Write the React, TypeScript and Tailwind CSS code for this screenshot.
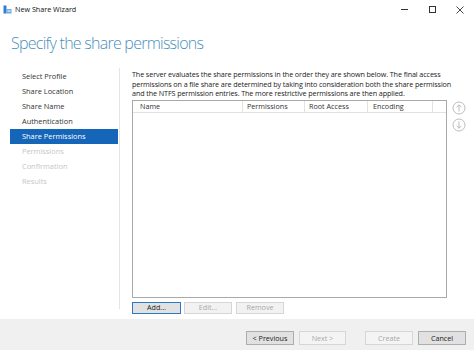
import React from "react";

const navItems: { label: string; state: "normal" | "active" | "disabled" }[] = [
  { label: "Select Profile", state: "normal" },
  { label: "Share Location", state: "normal" },
  { label: "Share Name", state: "normal" },
  { label: "Authentication", state: "normal" },
  { label: "Share Permissions", state: "active" },
  { label: "Permissions", state: "disabled" },
  { label: "Confirmation", state: "disabled" },
  { label: "Results", state: "disabled" },
];

function WizardIcon() {
  return (
    <svg width="9" height="9" viewBox="0 0 9 9">
      <rect x="0.5" y="0.5" width="3" height="8" fill="#2f7fd0" />
      <rect x="3.5" y="4" width="5" height="4.5" fill="#6aa9e4" />
      <rect x="4.5" y="5.5" width="3" height="1" fill="#ffffff" />
    </svg>
  );
}

function ArrowCircle({ dir }: { dir: "up" | "down" }) {
  return (
    <svg width="14" height="14" viewBox="0 0 14 14">
      <circle cx="7" cy="7" r="6" fill="none" stroke="#b5b5b5" strokeWidth="0.9" />
      {dir === "up" ? (
        <path d="M7 10.5V3.8M4.6 6.2L7 3.8l2.4 2.4" fill="none" stroke="#b5b5b5" strokeWidth="0.9" />
      ) : (
        <path d="M7 3.5v6.7M4.6 7.8L7 10.2l2.4-2.4" fill="none" stroke="#b5b5b5" strokeWidth="0.9" />
      )}
    </svg>
  );
}

export default function App() {
  return (
    <div className="w-[474px] h-[350px] bg-white flex flex-col overflow-hidden font-['Open_Sans','Noto_Sans',sans-serif] text-[#222]">
      {/* Title bar */}
      <div className="h-[19px] flex items-center pl-[3px] shrink-0">
        <WizardIcon />
        <span className="ml-[3px] text-[7.2px] leading-none text-[#111]">New Share Wizard</span>
        <div className="ml-auto flex items-center h-full">
          <div className="w-[28px] flex justify-center items-center">
            <div className="w-[7px] h-px bg-[#333]" />
          </div>
          <div className="w-[28px] flex justify-center items-center">
            <div className="w-[7px] h-[7px] border border-[#333]" />
          </div>
          <div className="w-[28px] flex justify-center items-center text-[#333]">
            <svg width="8" height="8" viewBox="0 0 8 8">
              <path d="M0.5 0.5l7 7M7.5 0.5l-7 7" stroke="#333" strokeWidth="0.9" />
            </svg>
          </div>
        </div>
      </div>

      {/* Header */}
      <div className="h-[45px] shrink-0 pl-[11px] pt-[14px]">
        <div className="text-[16px] leading-[20px] font-light text-[#4a8fba] tracking-[-0.75px]">
          Specify the share permissions
        </div>
      </div>

      {/* Main */}
      <div className="flex-1 flex min-h-0">
        {/* Nav */}
        <div className="w-[120px] shrink-0 pt-[4px] flex">
          <div className="w-[119px] pt-[1px]">
            {navItems.map((item) => (
              <div
                key={item.label}
                className={
                  item.state === "active"
                    ? "ml-[10px] w-[108px] h-[15px] flex items-center pl-[12px] bg-[#1565b8] text-white text-[7.4px]"
                    : item.state === "disabled"
                    ? "ml-[10px] w-[108px] h-[15px] flex items-center pl-[12px] text-[#c6c6c6] text-[7.4px]"
                    : "ml-[10px] w-[108px] h-[15px] flex items-center pl-[12px] text-[#333] text-[7.4px]"
                }
              >
                {item.label}
              </div>
            ))}
          </div>
          <div className="w-px bg-[#e4e4e4] mb-[10px]" />
        </div>

        {/* Content */}
        <div className="flex-1 pl-[12px] pt-[6px] flex flex-col">
          <div className="text-[7.2px] leading-[9.5px] text-[#222] whitespace-nowrap tracking-[-0.1px]">
            <div>The server evaluates the share permissions in the order they are shown below. The final access</div>
            <div>permissions on a file share are determined by taking into consideration both the share permission</div>
            <div>and the NTFS permission entries. The more restrictive permissions are then applied.</div>
          </div>
          <div className="flex mt-[1px]">
            <div className="w-[315px] h-[198px] border border-[#a9a9a9] bg-white flex flex-col">
              <div className="h-[12px] flex border-b border-[#e2e2e2] text-[7.2px] text-[#333]">
                <div className="w-[110px] pl-[7px] border-r border-[#e2e2e2] flex items-center">Name</div>
                <div className="w-[62px] pl-[4px] border-r border-[#e2e2e2] flex items-center">Permissions</div>
                <div className="w-[63px] pl-[4px] border-r border-[#e2e2e2] flex items-center">Root Access</div>
                <div className="w-[65px] pl-[5px] border-r border-[#e2e2e2] flex items-center">Encoding</div>
                <div className="flex-1" />
              </div>
            </div>
            <div className="ml-[5px] pt-[1px] flex flex-col gap-[3px]">
              <ArrowCircle dir="up" />
              <ArrowCircle dir="down" />
            </div>
          </div>
          <div className="flex gap-[3px] mt-[4px] text-[7.2px]">
            <div className="w-[49px] h-[12px] flex items-center justify-center bg-[#e1e1e1] border border-[#2a78c6] text-[#222]">
              Add...
            </div>
            <div className="w-[48px] h-[12px] flex items-center justify-center bg-[#f2f2f2] border border-[#d6d6d6] text-[#a8a8a8]">
              Edit...
            </div>
            <div className="ml-[1px] w-[48px] h-[12px] flex items-center justify-center bg-[#f2f2f2] border border-[#d6d6d6] text-[#a8a8a8]">
              Remove
            </div>
          </div>
        </div>
      </div>

      {/* Footer */}
      <div className="h-[31px] shrink-0 bg-[#f0f0f0] flex items-start justify-end pt-[12px] pr-[8px] text-[7.2px]">
        <div className="w-[48px] h-[14px] flex items-center justify-center bg-[#e1e1e1] border border-[#adadad] text-[#222]">
          &lt; Previous
        </div>
        <div className="ml-[5px] w-[47px] h-[14px] flex items-center justify-center bg-[#f4f4f4] border border-[#d6d6d6] text-[#a8a8a8]">
          Next &gt;
        </div>
        <div className="ml-[19px] w-[48px] h-[14px] flex items-center justify-center bg-[#f4f4f4] border border-[#d6d6d6] text-[#a8a8a8]">
          Create
        </div>
        <div className="ml-[5px] w-[48px] h-[14px] flex items-center justify-center bg-[#e1e1e1] border border-[#adadad] text-[#222]">
          Cancel
        </div>
      </div>
    </div>
  );
}
